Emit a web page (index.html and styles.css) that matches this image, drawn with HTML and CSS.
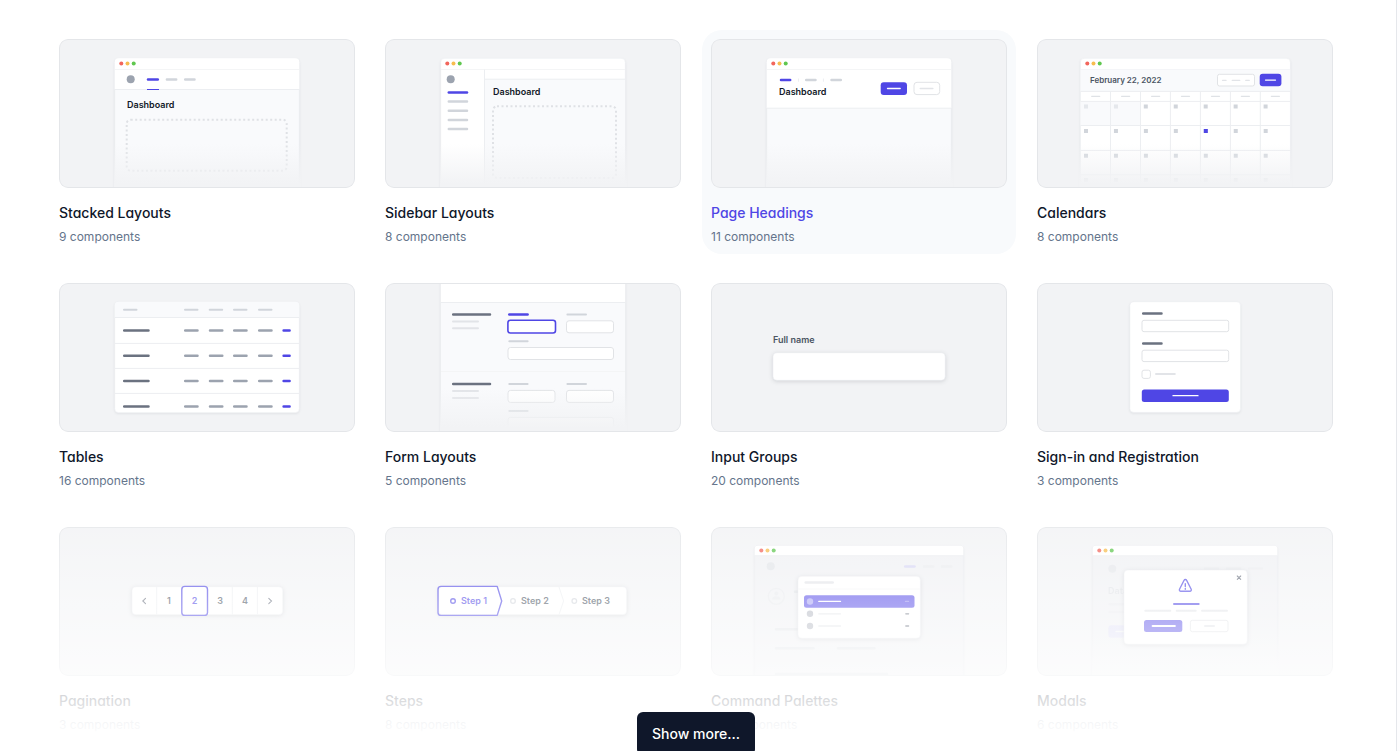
FILE: index.html
```html
<!DOCTYPE html>
<html lang="en">
<head>
    <meta charset="UTF-8">
    <meta name="viewport" content="width=device-width, initial-scale=1.0">
    <title>Components</title>
    <link rel="stylesheet" href="styles.css">
</head>
<body>
    <!-- shared pieces for the thumbnails -->
    <svg class="defs" width="0" height="0" aria-hidden="true">
        <defs>
            <linearGradient id="fade" x1="0" y1="0" x2="0" y2="1">
                <stop offset="0" stop-color="#f2f3f5" stop-opacity="0"/>
                <stop offset="0.9" stop-color="#f2f3f5"/>
            </linearGradient>
            <g id="dots">
                <circle cx="62.3" cy="24.5" r="2" fill="#f2665c"/>
                <circle cx="68.5" cy="24.5" r="2" fill="#f7bd4f"/>
                <circle cx="74.7" cy="24.5" r="2" fill="#5fc74f"/>
            </g>
        </defs>
    </svg>

    <main class="frame">
        <div class="grid">
            <a href="#" class="card">
                <div class="thumb">
                    <svg width="296" height="149" viewBox="0 0 296 149">
                        <rect class="panel soft" x="55.7" y="19.3" width="184.6" height="140" rx="4"/>
                        <path class="white" d="M55.7 50.3V23.3a4 4 0 0 1 4-4h176.6a4 4 0 0 1 4 4v27z"/>
                        <use href="#dots"/>
                        <path class="rule faint" d="M56 30.5h184"/>
                        <path class="rule" d="M56 50.5h184"/>
                        <circle cx="71.7" cy="40.3" r="4" fill="#9ca3af"/>
                        <path class="bar indigo" d="M89 40.4h9.8"/>
                        <path class="bar gray" d="M107.9 40.4h9.3M126.2 40.4h9.3"/>
                        <path class="tab" d="M88 50.5h12"/>
                        <text class="t9 dark" x="68" y="69">Dashboard</text>
                        <rect class="dashed" x="67.7" y="80.7" width="160" height="51" rx="4"/>
                        <rect x="55" y="105" width="187" height="44" fill="url(#fade)"/>
                    </svg>
                </div>
                <h3>Stacked Layouts</h3>
                <p>9 components</p>
            </a>

            <a href="#" class="card">
                <div class="thumb">
                    <svg width="296" height="149" viewBox="0 0 296 149">
                        <rect class="panel" x="55.7" y="19.3" width="184.6" height="140" rx="4"/>
                        <rect class="soft" x="99.5" y="40" width="140.5" height="109"/>
                        <use href="#dots"/>
                        <path class="rule faint" d="M56 30.5h184"/>
                        <path class="rule" d="M99.5 30.5v119M99.5 40.2h140.5"/>
                        <circle cx="65.7" cy="40.3" r="4" fill="#9ca3af"/>
                        <path class="bar indigo" d="M63.8 53.4h18.2"/>
                        <path class="bar gray" d="M63.8 62.5h18.2M63.8 71.8h18.2M63.8 81h18.2M63.8 90.1h18.2"/>
                        <text class="t9 dark" x="108" y="56">Dashboard</text>
                        <rect class="dashed" x="108" y="67.3" width="123" height="71.7" rx="4"/>
                        <rect x="55" y="105" width="187" height="44" fill="url(#fade)"/>
                    </svg>
                </div>
                <h3>Sidebar Layouts</h3>
                <p>8 components</p>
            </a>

            <a href="#" class="card active">
                <div class="thumb">
                    <svg width="296" height="149" viewBox="0 0 296 149">
                        <rect class="panel soft" x="55.7" y="19.3" width="184.6" height="140" rx="4"/>
                        <path class="white" d="M55.7 69V23.3a4 4 0 0 1 4-4h176.6a4 4 0 0 1 4 4V69z"/>
                        <use href="#dots"/>
                        <path class="rule faint" d="M56 30.5h184"/>
                        <path class="rule" d="M56 69.2h184"/>
                        <path class="bar indigo" d="M70 41.1h9.2"/>
                        <path class="bar gray" d="M95.2 41.1h9.3M120.5 41.1h9.3"/>
                        <path class="rule" d="M87.5 39.5v3.2M112.4 39.5v3.2"/>
                        <text class="t9 dark" x="68" y="56">Dashboard</text>
                        <rect class="solid" x="169.7" y="43.3" width="26.3" height="12.6" rx="3"/>
                        <path class="bar thin light" d="M176.5 49.5h12.7"/>
                        <rect class="field" x="203" y="43.3" width="25.7" height="12.3" rx="3"/>
                        <path class="bar thin pale" d="M209.2 49.5h12.7"/>
                        <rect x="55" y="105" width="187" height="44" fill="url(#fade)"/>
                    </svg>
                </div>
                <h3>Page Headings</h3>
                <p>11 components</p>
            </a>

            <a href="#" class="card">
                <div class="thumb">
                    <svg width="296" height="149" viewBox="0 0 296 149">
                        <rect class="panel" x="43.4" y="19.3" width="210" height="140" rx="4"/>
                        <use href="#dots" x="-12"/>
                        <rect class="soft" x="43.6" y="30.3" width="209.6" height="22"/>
                        <rect class="soft" x="43.6" y="62.3" width="60" height="24"/>
                        <path class="rule" d="M43.6 30.5h209.6" stroke-opacity=".4"/>
                        <path class="rule" d="M43.6 52.4h209.6M43.6 62.4h209.6M43.6 86.5h209.6M43.6 111.4h209.6M43.6 135.8h209.6"/>
                        <path class="rule" d="M73.5 52.4v97M103.5 52.4v97M133.4 52.4v97M163.4 52.4v97M193.4 52.4v97M223.3 52.4v97"/>
                        <text class="t8 mid" x="53" y="44">February 22, 2022</text>
                        <rect class="field" x="180.5" y="35.3" width="37" height="11.7" rx="2"/>
                        <path class="bar thin pale" d="M185.5 41.3h3.6M195.2 41.3h7.6M208.7 41.3h3.6"/>
                        <rect class="solid" x="222.7" y="34.8" width="21.7" height="12.4" rx="3"/>
                        <path class="bar thin light" d="M228.5 41.1h10"/>
                        <path class="bar thin gray" stroke-opacity=".7" d="M54.7 57.3h8M84.6 57.3h8M114.6 57.3h8M144.5 57.3h8M174.5 57.3h8M204.4 57.3h8M234.4 57.3h8"/>
                        <path class="days" stroke-opacity=".5" d="M47 67.4h34"/>
                        <path class="days" d="M106.8 67.4h124.2M47 92h184M47 116.7h184M47 141h184"/>
                        <rect class="solid" x="166.8" y="90" width="4" height="4"/>
                        <rect x="42" y="105" width="213" height="44" fill="url(#fade)"/>
                    </svg>
                </div>
                <h3>Calendars</h3>
                <p>8 components</p>
            </a>

            <a href="#" class="card">
                <div class="thumb">
                    <svg width="296" height="149" viewBox="0 0 296 149">
                        <rect class="panel" x="55.7" y="18.7" width="184.6" height="111" rx="4"/>
                        <path class="soft" d="M55.7 34.4V22.7a4 4 0 0 1 4-4h176.6a4 4 0 0 1 4 4v11.7z"/>
                        <path class="rule" d="M56 34.5h184M56 60.4h184M56 85.4h184M56 110.4h184"/>
                        <path class="bar slim gray" d="M65 26.8h12.5M126 26.8h12.5M150.7 26.8h12.5M175 26.8h12.5M200 26.8h12.5"/>
                        <path class="bar slate" d="M65.2 47.4h24.3M65.2 72.7h24.3M65.2 98h24.3M65.2 123.4h24.3"/>
                        <path class="bar steel" d="M126.2 47.4h12.3M151 47.4h12.3M175.2 47.4h12.3M200.2 47.4h12.3M126.2 72.7h12.3M151 72.7h12.3M175.2 72.7h12.3M200.2 72.7h12.3M126.2 98h12.3M151 98h12.3M175.2 98h12.3M200.2 98h12.3M126.2 123.4h12.3M151 123.4h12.3M175.2 123.4h12.3M200.2 123.4h12.3"/>
                        <path class="bar indigo" d="M224.6 47.4h6M224.6 72.7h6M224.6 98h6M224.6 123.4h6"/>
                    </svg>
                </div>
                <h3>Tables</h3>
                <p>16 components</p>
            </a>

            <a href="#" class="card">
                <div class="thumb">
                    <svg width="296" height="149" viewBox="0 0 296 149">
                        <rect class="panel soft" x="55.7" y="-6" width="184.6" height="165"/>
                        <rect class="white" x="55.9" y="0" width="184.2" height="19.3"/>
                        <path class="rule" d="M56 19.5h184"/>
                        <path class="rule faint" d="M56 88.5h184"/>
                        <path class="bar slate" d="M68.2 31.4h36.8M68.2 101.1h36.8"/>
                        <path class="bar slim pale" d="M68 38.4h25M68 45.2h25M68 108.1h25M68 114.9h25"/>
                        <path class="bar indigo" d="M124.3 31.4h18.3"/>
                        <path class="bar slim gray" d="M182.4 31.4h18.6M124.3 58.2h18.3M124.3 101.1h18.3M182.4 101.1h18.6M124.3 128.1h18.3"/>
                        <rect class="field focus" x="122.9" y="37.3" width="47.6" height="12.7" rx="2.5"/>
                        <rect class="field" x="181.5" y="37.8" width="47" height="12" rx="2.5"/>
                        <rect class="field" x="123" y="64.5" width="105.5" height="12" rx="2.5"/>
                        <rect class="field" x="123" y="107.4" width="47" height="12" rx="2.5"/>
                        <rect class="field" x="181.5" y="107.4" width="47" height="12" rx="2.5"/>
                        <rect class="field" x="123" y="134.4" width="105.5" height="20" rx="2.5"/>
                        <rect x="55" y="105" width="187" height="44" fill="url(#fade)"/>
                    </svg>
                </div>
                <h3>Form Layouts</h3>
                <p>5 components</p>
            </a>

            <a href="#" class="card">
                <div class="thumb">
                    <svg width="296" height="149" viewBox="0 0 296 149">
                        <text class="t9 mid" x="62" y="60">Full name</text>
                        <rect class="panel raised" x="62" y="69.7" width="172.2" height="27.6" rx="4"/>
                    </svg>
                </div>
                <h3>Input Groups</h3>
                <p>20 components</p>
            </a>

            <a href="#" class="card">
                <div class="thumb">
                    <svg width="296" height="149" viewBox="0 0 296 149">
                        <rect class="panel" x="92.8" y="18.7" width="110.8" height="110.7" rx="4"/>
                        <path class="bar slate" d="M106.2 30.5h18.3M106.2 60.5h18.3"/>
                        <rect class="field" x="105" y="37.3" width="86.7" height="11.4" rx="2"/>
                        <rect class="field" x="105" y="67.2" width="86.7" height="11.4" rx="2"/>
                        <rect class="field" x="105" y="87.2" width="8.4" height="8.2" rx="2"/>
                        <path class="bar slim pale" d="M119 91.1h18.8"/>
                        <rect class="solid" x="104.8" y="106.6" width="87" height="12.3" rx="2.5"/>
                        <path class="bar thin light" d="M136 112.7h25"/>
                    </svg>
                </div>
                <h3>Sign-in and Registration</h3>
                <p>3 components</p>
            </a>

            <a href="#" class="card">
                <div class="thumb">
                    <svg width="296" height="149" viewBox="0 0 296 149">
                        <rect class="panel raised" x="73" y="59.7" width="150.8" height="28" rx="4"/>
                        <path class="rule" d="M97.7 60v27.5M173.3 60v27.5M198.4 60v27.5"/>
                        <rect class="outline" x="122.8" y="59.4" width="25.7" height="29" rx="3"/>
                        <path class="chevron" d="M86.5 71.4l-2.7 2.6 2.7 2.6M209.8 71.4l2.7 2.6-2.7 2.6"/>
                        <text class="t9 mid center" x="110" y="77">1</text>
                        <text class="t9 purple center" x="135.5" y="77">2</text>
                        <text class="t9 mid center" x="161" y="77">3</text>
                        <text class="t9 mid center" x="186" y="77">4</text>
                    </svg>
                </div>
                <h3>Pagination</h3>
                <p>3 components</p>
            </a>

            <a href="#" class="card">
                <div class="thumb">
                    <svg width="296" height="149" viewBox="0 0 296 149">
                        <rect class="panel raised" x="53.7" y="59.7" width="188" height="28" rx="4"/>
                        <path class="rule" d="M174 60l4.6 14-4.6 13.6"/>
                        <path class="outline" d="M56 59.4h56.2l4.5 14.6-4.5 14.4H56a3 3 0 0 1-3-3v-23a3 3 0 0 1 3-3z"/>
                        <circle class="outline" cx="68" cy="74" r="2.3"/>
                        <circle class="ring" cx="128" cy="74" r="2.3"/>
                        <circle class="ring" cx="189.3" cy="74" r="2.3"/>
                        <text class="t9 purple" x="76" y="77">Step 1</text>
                        <text class="t9 mid" x="136" y="77">Step 2</text>
                        <text class="t9 mid" x="197" y="77">Step 3</text>
                    </svg>
                </div>
                <h3>Steps</h3>
                <p>8 components</p>
            </a>

            <a href="#" class="card">
                <div class="thumb">
                    <svg width="296" height="149" viewBox="0 0 296 149">
                        <rect class="panel dim" x="43.7" y="18.7" width="208.6" height="140" rx="3"/>
                        <path class="white" d="M43.7 28.3v-6.6a3 3 0 0 1 3-3h202.6a3 3 0 0 1 3 3v6.6z"/>
                        <use href="#dots" x="-12" y="-1"/>
                        <path class="rule" d="M44 28.8h208"/>
                        <g opacity=".45">
                            <circle cx="59.7" cy="39.3" r="4" fill="#d1d5db"/>
                            <path class="bar lavender" d="M194.2 39.4h9.3"/>
                            <path class="bar pale" d="M213 39.4h9.3M231 39.4h9.3"/>
                            <g opacity=".5">
                                <circle class="ring" cx="65.3" cy="69.3" r="8"/>
                                <circle cx="65.3" cy="66.5" r="2" fill="#d1d5db"/>
                                <path fill="#d1d5db" d="M61.3 72.5a4 3.2 0 0 1 8 0z"/>
                            </g>
                            <path class="bar gray" d="M84 64.7h6M65 102.2h24M65 121.2h37.5M127 121.2h36.5M65 147h111"/>
                        </g>
                        <rect class="panel raised" x="87" y="49.2" width="122.4" height="62" rx="4"/>
                        <path class="bar pale" d="M94.7 55.4h27"/>
                        <path class="rule faint" d="M87 62h122"/>
                        <rect class="lilac" x="93" y="68.3" width="110.5" height="12.4" rx="2.5"/>
                        <circle cx="99" cy="74.5" r="3.2" fill="#a5a0f3"/>
                        <path class="bar thin light" d="M107.8 74.4h21.7"/>
                        <path class="bar thin violet" d="M194.5 74.4h3"/>
                        <circle cx="99" cy="86.8" r="3.2" fill="#b4b8c2"/>
                        <circle cx="99" cy="99" r="3.2" fill="#b4b8c2"/>
                        <path class="bar thin pale" d="M107.8 86.8h21.7M107.8 99h21.7"/>
                        <path class="bar thin slate" d="M194.8 86.8h2.8M194.8 99h2.8"/>
                    </svg>
                </div>
                <h3>Command Palettes</h3>
                <p>10 components</p>
            </a>

            <a href="#" class="card">
                <div class="thumb">
                    <svg width="296" height="149" viewBox="0 0 296 149">
                        <rect class="panel dim" x="55.7" y="18.7" width="184.6" height="140" rx="3"/>
                        <path class="white" d="M55.7 28.6v-6.9a3 3 0 0 1 3-3h178.6a3 3 0 0 1 3 3v6.9z"/>
                        <use href="#dots" y="-1"/>
                        <path class="rule" d="M56 28.8h184"/>
                        <g opacity=".35">
                            <circle cx="75.3" cy="41.7" r="4" fill="#d1d5db"/>
                            <path class="bar pale" d="M168 41.5h13M190 41.5h13M212 41.5h13M72.5 77.2h15M72.5 84.9h15"/>
                            <text class="t9 haze" x="71" y="67">Data</text>
                            <rect x="71.3" y="98.3" width="30" height="12.4" rx="3" fill="#c7c4f9"/>
                            <path class="bar thin light" d="M79 104.5h10"/>
                        </g>
                        <rect x="55" y="105" width="187" height="44" fill="url(#fade)"/>
                        <rect class="panel raised" x="87" y="43" width="123.3" height="74.2" rx="4"/>
                        <path class="outline" d="M147.1 53.2a1.4 1.4 0 0 1 2.5 0l4.6 9a1.4 1.4 0 0 1-1.3 2h-9.1a1.4 1.4 0 0 1-1.3-2z"/>
                        <path class="outline" d="M148.3 56.7v2.8M148.3 61.4v.8"/>
                        <path class="chevron" d="M200.3 49l3.4 3.4M203.7 49l-3.4 3.4"/>
                        <path class="bar slim indigo" d="M137 76.9h24.7"/>
                        <path class="bar slim pale" d="M108.3 83.8h25M139.7 83.8h19M165 83.8h25"/>
                        <rect class="lilac" x="107" y="93" width="38.3" height="12" rx="2.5"/>
                        <path class="bar slim light" d="M115.6 99h22.3"/>
                        <rect class="field" x="153.4" y="93.3" width="37.6" height="11.4" rx="2"/>
                        <path class="bar slim pale" d="M168 99h9"/>
                    </svg>
                </div>
                <h3>Modals</h3>
                <p>6 components</p>
            </a>
        </div>

        <div class="overlay">
            <button type="button" class="btn">Show more...</button>
        </div>
    </main>
</body>
</html>
```
FILE: styles.css
```css
* {
    box-sizing: border-box;
}
body {
    margin: 0;
    background: #fdfdfe;
    font-family: Inter, "Liberation Sans", sans-serif;
}
.defs {
    position: absolute;
}
.frame {
    position: relative;
    min-height: 100vh;
    margin-right: 3px;
    padding: 30px 54px 0 50px;
    border-right: 1px solid #e5e7eb;
    background: #fff;
    overflow: hidden;
}
.grid {
    display: grid;
    grid-template-columns: repeat(4, minmax(0, 1fr));
    gap: 20px 12px;
}
.card {
    display: block;
    padding: 9px 9px 5px;
    border-radius: 20px;
    color: #0f172a;
    text-decoration: none;
    font-feature-settings: "cv11";
}
.card.active {
    background: #f8fafc;
}
.card.active h3 {
    color: #4f46e5;
}
.thumb {
    position: relative;
    display: flex;
    justify-content: center;
    height: 149px;
    margin-bottom: 13px;
    border-radius: 9px;
    background: #f2f3f5;
    overflow: hidden;
    font-feature-settings: normal;
}
.thumb::after {
    content: "";
    position: absolute;
    inset: 0;
    border: 1px solid #e4e6e9;
    border-radius: 9px;
}
.thumb svg {
    flex: none;
}
.card h3 {
    margin: 0;
    font-size: 14px;
    font-weight: 500;
    line-height: 24px;
}
.card p {
    margin: 0;
    color: #64748b;
    font-size: 12px;
    line-height: 24px;
}

/* fades the last row out behind the button */
.overlay {
    position: absolute;
    left: 0;
    right: 0;
    bottom: 0;
    display: flex;
    justify-content: center;
    align-items: flex-end;
    height: 272px;
    padding: 0 54px 0 50px;
    background: linear-gradient(rgba(255, 255, 255, 0), #fff 96%);
}
.btn {
    height: 43px;
    margin-bottom: -4px;
    padding: 0 15px;
    border: none;
    border-radius: 6px;
    background: #0f172a;
    color: #fff;
    font-family: inherit;
    font-size: 14px;
    font-weight: 500;
    cursor: pointer;
}
.btn:hover {
    background: #334155;
}

/* thumbnail drawings */
.panel {
    fill: #fff;
    stroke: #e9ebee;
    stroke-width: 0.5;
    filter: drop-shadow(0 1px 1px rgba(17, 24, 39, 0.08));
}
.raised {
    filter: drop-shadow(0 1px 2px rgba(17, 24, 39, 0.15));
}
.white {
    fill: #fff;
}
.soft {
    fill: #f9fafc;
}
.dim {
    fill: #eff0f3;
}
.solid {
    fill: #4f46e5;
}
.lilac {
    fill: #5b50e8;
}
.field {
    fill: #fff;
    stroke: #e1e3e6;
}
.field.focus {
    stroke: #4f46e5;
    stroke-width: 1.6;
}
.outline {
    fill: none;
    stroke: #4f46e5;
    stroke-width: 1.4;
    stroke-linecap: round;
    stroke-linejoin: round;
}
.ring {
    fill: none;
    stroke: #d1d5db;
    stroke-width: 1.3;
}
.chevron {
    fill: none;
    stroke: #6b7280;
    stroke-width: 1.1;
    stroke-linecap: round;
}
.tab {
    stroke: #4f46e5;
}
.rule {
    fill: none;
    stroke: #eceef1;
}
.rule.faint {
    stroke: #f4f5f6;
}
.dashed {
    fill: none;
    stroke: #dfe1e5;
    stroke-width: 2;
    stroke-dasharray: 2 2.5;
}
.days {
    stroke: #d1d5db;
    stroke-width: 4;
    stroke-dasharray: 4 25.95;
}
.bar {
    fill: none;
    stroke-width: 2.5;
    stroke-linecap: round;
}
.slim {
    stroke-width: 2;
}
.thin {
    stroke-width: 1.3;
}
.indigo {
    stroke: #4f46e5;
}
.violet {
    stroke: #8f86ee;
}
.lavender {
    stroke: #b8b4f5;
}
.gray {
    stroke: #d1d5db;
}
.pale {
    stroke: #e2e4e8;
}
.steel {
    stroke: #9ca3af;
}
.slate {
    stroke: #6b7280;
}
.light {
    stroke: #fff;
}
.t9 {
    font-size: 9px;
    font-weight: 600;
}
.t8 {
    font-size: 8px;
    font-weight: 600;
}
.dark {
    fill: #111827;
}
.mid {
    fill: #4b5563;
}
.purple {
    fill: #4f46e5;
}
.haze {
    fill: #c4c8cf;
}
.center {
    text-anchor: middle;
}
```
